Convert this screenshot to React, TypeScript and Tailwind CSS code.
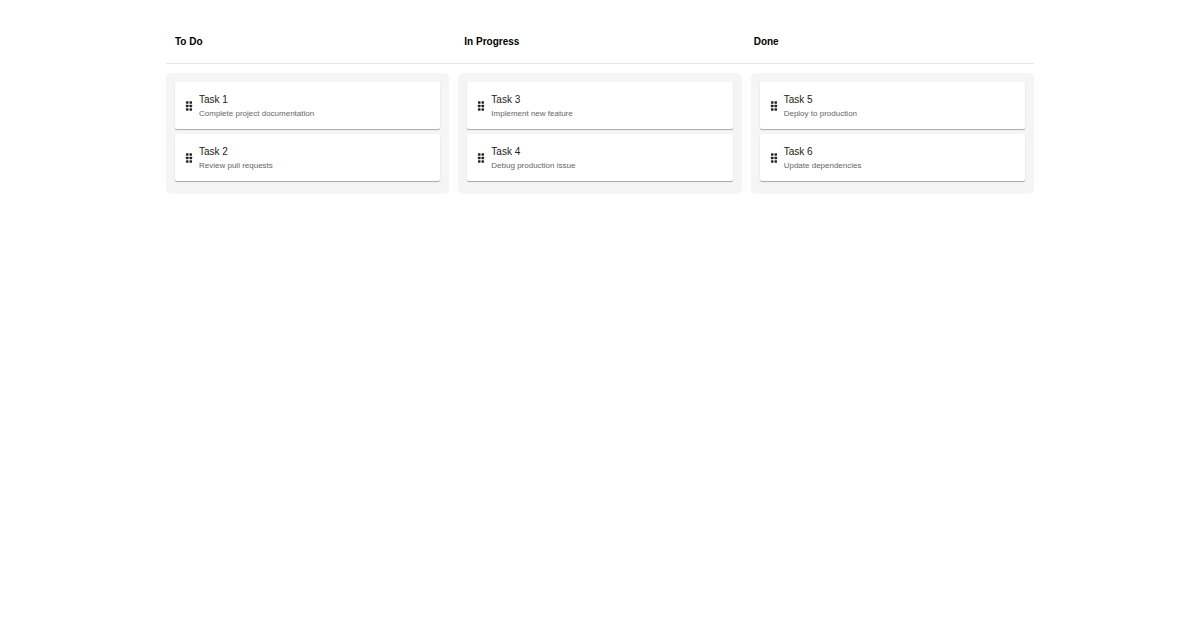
type Task = {
  id: string;
  title: string;
  description: string;
};

type Column = {
  id: string;
  title: string;
  tasks: Task[];
};

const columns: Column[] = [
  {
    id: "todo",
    title: "To Do",
    tasks: [
      { id: "1", title: "Task 1", description: "Complete project documentation" },
      { id: "2", title: "Task 2", description: "Review pull requests" }
    ]
  },
  {
    id: "in-progress",
    title: "In Progress",
    tasks: [
      { id: "3", title: "Task 3", description: "Implement new feature" },
      { id: "4", title: "Task 4", description: "Debug production issue" }
    ]
  },
  {
    id: "done",
    title: "Done",
    tasks: [
      { id: "5", title: "Task 5", description: "Deploy to production" },
      { id: "6", title: "Task 6", description: "Update dependencies" }
    ]
  }
];

function DragHandle() {
  return (
    <svg viewBox="0 0 24 24" className="size-3.5 shrink-0 fill-[#222222]" aria-hidden="true">
      {[4, 10, 16].map((y) => (
        <g key={y}>
          <rect x="6.8" y={y - 0.2} width="4.4" height="4.4" rx="0.8" />
          <rect x="12.8" y={y - 0.2} width="4.4" height="4.4" rx="0.8" />
        </g>
      ))}
    </svg>
  );
}

function TaskCard({ task }: { task: Task }) {
  return (
    <li className="flex items-center gap-[3px] rounded-[2px] bg-white px-[7px] py-[9px] shadow-[0_1px_1px_rgba(0,0,0,0.32)]">
      <DragHandle />
      <div>
        <h3 className="text-[10px] leading-[17px] text-[#212121]">{task.title}</h3>
        <p className="text-[8px] leading-[12px] text-[#666666]">{task.description}</p>
      </div>
    </li>
  );
}

export default function App() {
  return (
    <main className="mx-auto w-full max-w-[868px] pt-5 font-['Liberation_Sans',Arial,sans-serif]">
      <div className="grid grid-cols-3 border-b border-[#e5e5e5]">
        {columns.map((column) => (
          <h2 key={column.id} className="px-[9px] pt-[14px] pb-[13px] text-[10px] leading-[16px] font-bold text-black">
            {column.title}
          </h2>
        ))}
      </div>
      <div className="mt-[9px] grid grid-cols-3 gap-[9px]">
        {columns.map((column) => (
          <ul key={column.id} className="flex flex-col gap-[5px] rounded-[5px] bg-[#f5f5f5] px-[9px] pt-[9px] pb-[13px]">
            {column.tasks.map((task) => (
              <TaskCard key={task.id} task={task} />
            ))}
          </ul>
        ))}
      </div>
    </main>
  );
}
